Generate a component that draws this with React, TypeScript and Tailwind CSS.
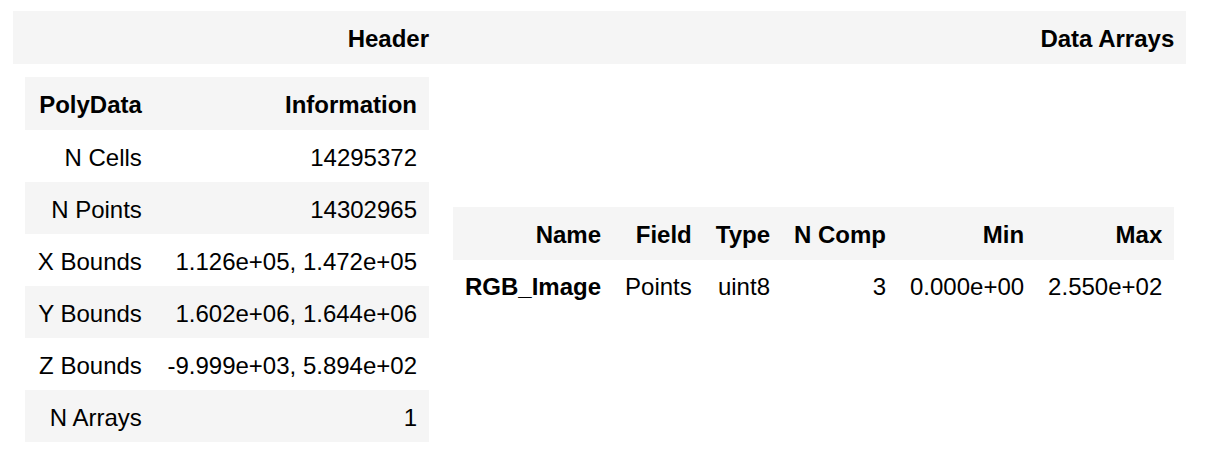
const info: [string, string][] = [
  ["N Cells", "14295372"],
  ["N Points", "14302965"],
  ["X Bounds", "1.126e+05, 1.472e+05"],
  ["Y Bounds", "1.602e+06, 1.644e+06"],
  ["Z Bounds", "-9.999e+03, 5.894e+02"],
  ["N Arrays", "1"],
];

const arrayCols = ["Name", "Field", "Type", "N Comp", "Min", "Max"];

const arrays = [
  { name: "RGB_Image", field: "Points", type: "uint8", ncomp: "3", min: "0.000e+00", max: "2.550e+02" },
];

const th = "h-[53px] px-3 pt-[3px] pb-0 text-right align-middle font-bold leading-[24px] whitespace-nowrap";
const td = "h-[52px] px-3 pt-[3px] pb-0 text-right align-middle font-normal leading-[24px] whitespace-nowrap";

export default function App() {
  return (
    <div className="min-h-screen bg-white pt-[11px] pl-[13px] text-[24px] text-black [font-family:'Liberation_Sans',Arial,sans-serif]">
      <table className="border-collapse">
        <tbody>
          <tr className="bg-[#f5f5f5]">
            <th className={th}>Header</th>
            <th className={th}>Data Arrays</th>
          </tr>
          <tr>
            <td className="px-3 pt-[13px] pb-3 align-middle">
              <table className="w-[404px] border-collapse">
                <tbody>
                  <tr className="bg-[#f5f5f5]">
                    <th className={th}>PolyData</th>
                    <th className={th}>Information</th>
                  </tr>
                  {info.map(([k, v], i) => (
                    <tr key={k} className={i % 2 === 1 ? "bg-[#f5f5f5]" : ""}>
                      <td className={td}>{k}</td>
                      <td className={td}>{v}</td>
                    </tr>
                  ))}
                </tbody>
              </table>
            </td>
            <td className="px-3 py-3 align-middle">
              <table className="border-collapse">
                <tbody>
                  <tr className="bg-[#f5f5f5]">
                    {arrayCols.map((c) => (
                      <th key={c} className={th}>
                        {c}
                      </th>
                    ))}
                  </tr>
                  {arrays.map((a) => (
                    <tr key={a.name}>
                      <th className={th.replace("h-[53px]", "h-[52px]")}>{a.name}</th>
                      <td className={td}>{a.field}</td>
                      <td className={td}>{a.type}</td>
                      <td className={td}>{a.ncomp}</td>
                      <td className={td}>{a.min}</td>
                      <td className={td}>{a.max}</td>
                    </tr>
                  ))}
                </tbody>
              </table>
            </td>
          </tr>
        </tbody>
      </table>
    </div>
  );
}
